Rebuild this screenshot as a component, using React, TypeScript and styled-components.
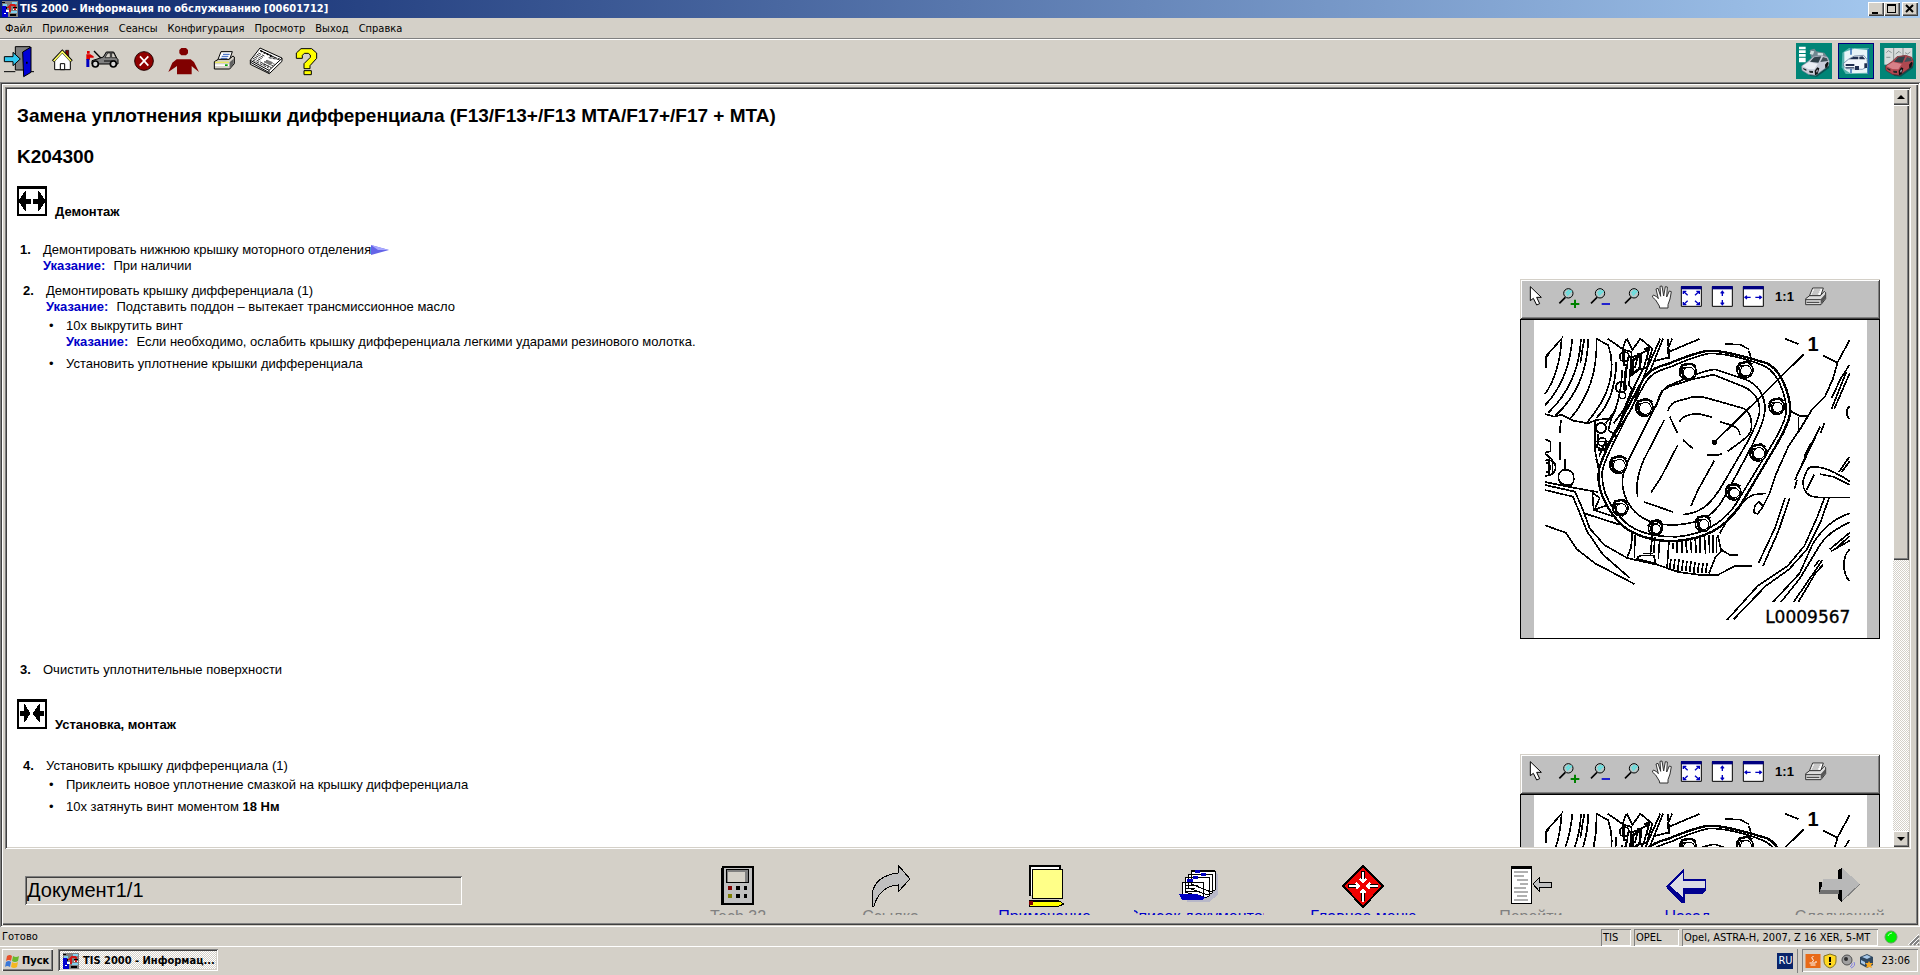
import React from "react";
import styled, { createGlobalStyle, css } from "styled-components";

const face = "#d4d0c8";
const ui = `"DejaVu Sans Condensed", "DejaVu Sans", Tahoma, sans-serif`;
const arial = `"Liberation Sans", Arial, sans-serif`;

const sunken = css`
  box-shadow: inset 1px 1px #808080, inset -1px -1px #fff, inset 2px 2px #404040, inset -2px -2px ${face};
`;
const raised = css`
  box-shadow: inset 1px 1px #fff, inset -1px -1px #404040, inset -2px -2px #808080;
`;
const checker = css`
  background: repeating-conic-gradient(#fff 0 25%, ${face} 0 50%) 0 0 / 2px 2px;
`;

const GlobalStyle = createGlobalStyle`
  * { box-sizing: border-box; }
  body { margin: 0; background: ${face}; color: #000; font: 11px/14px ${ui}; }
  button { border: 0; padding: 0; background: none; font: inherit; color: inherit; }
  svg { display: block; flex: none; }
`;

const Window = styled.div`
  display: flex;
  flex-direction: column;
  height: 100vh;
`;

const TitleBar = styled.header`
  display: flex;
  align-items: center;
  gap: 2px;
  height: 18px;
  padding: 0 2px;
  background: linear-gradient(90deg, #0a246a, #a6caf0);
  color: #fff;
`;
const Caption = styled.h1`
  flex: 1;
  margin: 0;
  font-size: 11px;
  line-height: 18px;
`;
const CaptionButton = styled.button<{ $spaced?: boolean }>`
  width: 16px;
  height: 14px;
  margin-left: ${(p) => (p.$spaced ? 0 : -2)}px;
  background: ${face};
  ${raised}
`;

const MenuBar = styled.nav`
  display: flex;
  height: 22px;
  gap: 10px;
  padding: 3px 5px 0;
  border-bottom: 1px solid #fff;
  box-shadow: inset 0 -1px #808080;
`;
const MenuItem = styled.button`
  height: 16px;
  line-height: 16px;
`;

const Toolbar = styled.div`
  display: flex;
  align-items: center;
  height: 42px;
  padding-right: 4px;
  gap: 1px;
`;
const ToolButton = styled.button`
  width: 40px;
  height: 40px;
`;
const ModeGroup = styled.div`
  display: flex;
  gap: 6px;
  margin-left: auto;
`;
const ModeButton = styled.button<{ $active?: boolean }>`
  width: 36px;
  height: 36px;
  background: #008577;
  border: 1px solid ${(p) => (p.$active ? "#000080" : "#008577")};
`;

const Frame = styled.main`
  flex: 1;
  min-height: 0;
  display: flex;
  padding: 2px;
  ${sunken}
`;
const Workspace = styled.div`
  flex: 1;
  min-width: 0;
  display: flex;
  flex-direction: column;
  padding: 3px 2px 2px 3px;
  ${raised}
`;
const Viewer = styled.section`
  flex: 1;
  min-height: 0;
  display: flex;
  margin-right: 5px;
  padding: 2px;
  background: #fff;
  ${sunken}
`;

const Page = styled.article`
  flex: 1;
  min-width: 0;
  overflow: hidden;
  padding: 15px 13px 0 10px;
  font: 13px/16px ${arial};
`;
const PageTitle = styled.h2`
  margin: 0 0 17px;
  font-size: 19px;
  line-height: 24px;
`;
const SectionTitle = styled.h3`
  display: flex;
  align-items: flex-end;
  gap: 8px;
  margin: 17px 0 21px;
  font-size: 13px;
  line-height: 16px;
  svg {
    margin-bottom: 4px;
  }
`;
const Steps = styled.ol`
  list-style: none;
  margin: 0 0 21px;
  padding: 0;
`;
const Step = styled.li<{ $figure?: boolean }>`
  display: flex;
  align-items: flex-start;
  padding-left: ${(p) => (p.$figure ? 6 : 3)}px;
  margin-bottom: ${(p) => (p.$figure ? 22 : 5)}px;
  &:last-child {
    margin-bottom: 0;
  }
`;
const StepNumber = styled.b<{ $figure?: boolean }>`
  width: 23px;
  padding-top: ${(p) => (p.$figure ? 4 : 1)}px;
`;
const StepBody = styled.div<{ $figure?: boolean }>`
  flex: 1;
  padding-top: ${(p) => (p.$figure ? 4 : 1)}px;
`;
const Line = styled.div`
  display: flex;
`;
const Note = styled.div`
  b {
    color: #0000c8;
    margin-right: 8px;
  }
`;
const Bullets = styled.ul`
  list-style: none;
  margin: 3px 0 0;
  padding: 0;
`;
const Bullet = styled.li`
  display: flex;
  margin-bottom: 6px;
  &::before {
    content: "•";
    width: 17px;
    padding-left: 3px;
  }
`;

const Figure = styled.figure`
  flex: none;
  width: 360px;
  margin: 0;
`;
const FigureTools = styled.div`
  display: flex;
  height: 40px;
  padding: 3px 1px;
  background: #c0c0c0;
  box-shadow: inset 1px 1px ${face}, inset -1px -1px #404040, inset 2px 2px #fff, inset -2px -2px #808080;
`;
const FigureButton = styled.button`
  width: 31px;
  height: 30px;
  font: bold 13px/30px ${arial};
`;
const FigureCanvas = styled.div`
  display: flex;
  justify-content: center;
  border: 1px solid #000;
  background: #c0c0c0;
  svg {
    background: #fff;
  }
`;

const ScrollBar = styled.div`
  display: flex;
  flex-direction: column;
  width: 16px;
  ${checker}
`;
const ScrollButton = styled.button`
  flex: none;
  width: 16px;
  height: 16px;
  background: ${face};
  ${raised}
`;
const ScrollTrack = styled.div`
  flex: 1;
`;
const ScrollThumb = styled.div`
  height: 62.7%;
  background: ${face};
  ${raised}
`;

const Panel = styled.footer`
  display: flex;
  align-items: flex-start;
  height: 74px;
`;
const PanelStatus = styled.div`
  flex: none;
  width: 34.4%;
  padding: 27px 0 0 20px;
`;
const DocumentField = styled.output`
  display: block;
  width: 68.6%;
  height: 29px;
  padding-left: 2px;
  font: 20px/28px ${arial};
  box-shadow: inset 1px 1px #808080, inset -1px -1px #fff, inset 2px 2px #404040;
`;
const PanelButtons = styled.div`
  flex: 1;
  display: grid;
  grid-template-columns: 152fr 154fr 155fr 155fr 175fr 161fr 153fr 153fr;
`;
const PanelButton = styled.button<{ $muted?: boolean }>`
  display: flex;
  flex-direction: column;
  align-items: center;
  height: 66px;
  padding-top: 15px;
  overflow: hidden;
  color: ${(p) => (p.$muted ? "#808080" : "#0000c8")};
`;
const PanelLabel = styled.span`
  display: flex;
  justify-content: center;
  width: 130px;
  overflow: hidden;
  white-space: nowrap;
  font: 16px/18px ${arial};
`;

const StatusBar = styled.div`
  display: flex;
  align-items: center;
  height: 20px;
  gap: 3px;
  padding: 1px 0 0 2px;
  border-bottom: 1px solid #fff;
`;
const StatusText = styled.span`
  flex: 1;
`;
const StatusCell = styled.span<{ $w: number }>`
  width: ${(p) => p.$w}px;
  height: 17px;
  padding-left: 2px;
  line-height: 17px;
  white-space: nowrap;
  box-shadow: inset 1px 1px #808080, inset -1px -1px #fff;
`;

const TaskBar = styled.div`
  display: flex;
  align-items: flex-start;
  height: 28px;
  padding: 2px 2px 0;
`;
const StartButton = styled.button`
  display: flex;
  align-items: center;
  gap: 2px;
  width: 51px;
  height: 22px;
  padding: 1px 0 0 2px;
  font-weight: bold;
  ${raised}
`;
const TaskButton = styled.button`
  display: flex;
  align-items: center;
  gap: 4px;
  width: 160px;
  height: 22px;
  margin-left: 5px;
  padding: 2px 0 0 5px;
  font-weight: bold;
  white-space: nowrap;
  ${checker}
  ${sunken}
`;
const Language = styled.button`
  width: 16px;
  height: 16px;
  margin: 4px 4px 0 auto;
  background: #0a246a;
  color: #fff;
`;
const Tray = styled.div`
  display: flex;
  align-items: center;
  gap: 1px;
  height: 23px;
  margin-left: 4px;
  padding: 1px 8px 0 3px;
  box-shadow: inset 1px 1px #808080, inset -1px -1px #fff;
`;
const TraySplit = styled.div`
  width: 1px;
  height: 24px;
  background: #808080;
`;
const Clock = styled.time`
  margin-left: 5px;
`;

const AppIcon = () => (
  <svg width="16" height="16" viewBox="0 0 16 16" shapeRendering="crispEdges">
    <path fill="#808080" d="M0 0h16v16H0z" />
    <path fill="#0000d0" d="M0 5h4v6h2v5H0z" />
    <path fill="#80d0f0" d="M1 3h4v2H1zM10 1h5v2h-5zM9 10h6v2H9z" />
    <path fill="#fff" d="M4 9h3v2H4zM11 8h4v1h-4zM2 12h2v1H2z" />
    <path fill="#d01818" d="M6 5l2-2h5v2H9v6H7V7H5zM12 4h2v5h-2z" />
    <path fill="#000" d="M0 1h3v1H0zM8 13h6v2H8zM11 6h4v1h-4zM4 6h1v2H4z" />
  </svg>
);

/* main toolbar icons, 40px cells on a 120-unit grid */
const toolIcons: { name: string; art: React.ReactNode }[] = [
  {
    name: "Выход",
    art: (
      <>
        <path fill="#808080" stroke="#000" strokeWidth="3" d="M46 17h44v70H46z" />
        <path stroke="#000" strokeWidth="3" d="M12 92h34M90 92h12" />
        <path fill="#0000d8" stroke="#000" strokeWidth="3" d="M68 33l25-15v76l-22 13z" />
        <path fill="#000" d="M78 62h5v6h-5z" />
        <path fill="#30c8f0" stroke="#000" strokeWidth="3" d="M13 47h26V34l22 20-22 20V62H13z" />
      </>
    ),
  },
  {
    name: "Домой",
    art: (
      <>
        <path fill="#800000" stroke="#000" strokeWidth="2" d="M74 28h9v25h-9z" />
        <path fill="#fff" stroke="#000" strokeWidth="3" d="M41 58l23-24 24 24v28H41z" />
        <path fill="none" stroke="#000" strokeWidth="9" d="M36 61l28-30 28 30" />
        <path fill="none" stroke="#ffff60" strokeWidth="5" d="M38 60l26-28 26 28" />
        <path fill="#fff" stroke="#000" strokeWidth="3" d="M58 68h13v18H58z" />
      </>
    ),
  },
  {
    name: "Автомобиль",
    art: (
      <>
        <path fill="#d00" d="M15 30h8v8h-8zM13 40h12l10 6v4H24v6H13z" />
        <path fill="#0000c0" d="M13 54h9v24h-9z" />
        <path fill="none" stroke="#000" strokeWidth="4" d="M36 30l21 22" />
        <path fill="#808080" stroke="#000" strokeWidth="3" d="M30 59l22-7 12-4 9-15h22l9 18 4 5v13H30z" />
        <path fill={face} stroke="#000" strokeWidth="2" d="M69 50l8-14h8v14zM89 36h6l7 14H89z" />
        <path stroke="#000" strokeWidth="3" d="M66 60h34" />
        <circle cx="40" cy="69" r="9" fill="#d8d8d8" stroke="#000" strokeWidth="5" />
        <circle cx="94" cy="69" r="9" fill="#d8d8d8" stroke="#000" strokeWidth="5" />
      </>
    ),
  },
  {
    name: "Отмена",
    art: (
      <>
        <circle cx="63" cy="60" r="28" fill="#900000" stroke="#200000" strokeWidth="3" />
        <path stroke="#fff" strokeWidth="5" d="M51 46l25 28M76 46L50 74" />
      </>
    ),
  },
  {
    name: "Клиент",
    art: (
      <path fill="#800000" d="M52 21h14l6 6v10l-6 6H52l-6-6V27zM38 55h42l10 8 15 30-18-14-4-4v25H39V75l-4 3-22 15 12-28z" />
    ),
  },
  {
    name: "Печать",
    art: (
      <>
        <path fill="#fff" stroke="#000" strokeWidth="3" d="M48 32h34l-9 26H38z" />
        <path stroke="#3060c0" strokeWidth="3" d="M54 40h20M50 46h20M47 52h20" />
        <path fill={face} stroke="#000" strokeWidth="3" d="M28 62l12-7h32l12-10 4 3v20L74 84H28z" />
        <path fill="#606060" d="M74 64l12-11v15L74 82z" />
        <path fill="#e8e860" d="M30 62h42v4H30z" />
        <path fill="#fff" d="M30 70h42v5H30z" />
        <path fill="#00a000" d="M60 70h8v5h-8z" />
      </>
    ),
  },
  {
    name: "Новости",
    art: (
      <>
        <path fill="#fff" stroke="#000" strokeWidth="3" d="M42 21l66 30v10L70 98 13 70V58z" />
        <path stroke="#000" strokeWidth="3" d="M42 28l50 24M13 58l56 30 39-36M69 88v9M14 64l54 30" />
        <path
          stroke="#333"
          strokeWidth="3"
          strokeDasharray="9 3"
          d="M37 36l18 9M33 40l18 9M29 44l18 9M25 48l18 9M21 52l50 25M20 57l48 24M68 50l32 6M72 46l30 8M54 62l28 13M60 58l26 12M50 68l26 12"
        />
        <path stroke="#000" strokeWidth="5" strokeDasharray="6 4" d="M44 30l36 17" />
        <path fill="#777" d="M63 56l18 8-8 9-18-9z" />
      </>
    ),
  },
  {
    name: "Справка",
    art: (
      <path
        fill="#ff0"
        stroke="#000"
        strokeWidth="3"
        d="M28 52V36l14-13h32l15 13v16L69 74v9H51V68l19-19v-7l-6-5H52l-6 6v9zM51 89h22v12H51z"
      />
    ),
  },
];

const Car = ({ body, light, shade }: { body: string; light: string; shade: string }) => (
  <>
    <path fill="#103038" d="M20 74l20 22 20 2 36-26 2-14z" opacity=".6" />
    <path fill={body} stroke={shade} strokeWidth="2" d="M14 66l20-14 14-14 26-4 18 6 5 12-3 14-38 28-22-3-19-12z" />
    <path fill={light} d="M16 66l20-12 26 6-10 16-18-1z" />
    <path fill="#304048" d="M39 53l12-13 22-3-9 19z" />
    <path fill="#405058" d="M70 54l8-15 12 4 3 8z" />
    <path fill="#202828" d="M18 72l10 4v5l-9-5zM36 80l12 1v6l-10-1z" />
    <path fill="#111" d="M53 80l8-10 6 3-5 17-8 4zM84 62l7-9 4 3-4 14-6 3z" />
    <path fill="#aab" d="M57 82l4-6 2 3-3 8z" />
  </>
);

const ArrowsBox = ({ inward }: { inward?: boolean }) => (
  <svg width="30" height="30" viewBox="0 0 30 30" shapeRendering="crispEdges">
    <path fill="#000" d="M0 0h30v30H0z" />
    <path fill="#fff" d="M2 3h26v25H2z" />
    {inward ? (
      <path fill="#000" d="M3 12h4V5h1l5 9v1l-5 8H7v-6H3zM27 12h-4V5h-1l-6 9v1l6 8h1v-6h4z" />
    ) : (
      <path fill="#000" d="M2 14l6-9h1v8h5v5H9v7H8l-6-9zM28 14l-6-9h-1v8h-5v5h5v7h1l6-9z" />
    )}
  </svg>
);

const Lens = ({ x }: { x: number }) => (
  <g transform={`translate(${x} 0)`}>
    <path stroke="#000" strokeWidth="5" d="M22 64l18-18" />
    <circle cx="49" cy="34" r="14" fill="#b8c8c8" stroke="#000" strokeWidth="3" />
    <path fill="none" stroke="#60e0e0" strokeWidth="5" d="M42 34l10-10M45 40l14-14" />
  </g>
);

const WindowGlyph = ({ arrows }: { arrows: string }) => (
  <>
    <path fill="#fff" stroke="#000" strokeWidth="3" d="M16 14h60v59H16z" />
    <path fill="#000080" d="M15 12h62v10H15z" />
    <path fill="none" stroke="#0000c0" strokeWidth="4" d={arrows} />
  </>
);

const figureIcons: { name: string; art: React.ReactNode }[] = [
  {
    name: "Выбор",
    art: <path fill="#fff" stroke="#000" strokeWidth="3" d="M28 14v42l9-7 10 20 9-4-9-19h14z" />,
  },
  {
    name: "Увеличить",
    art: (
      <>
        <Lens x={0} />
        <path stroke="#008000" strokeWidth="6" d="M56 66h26M69 53v25" />
      </>
    ),
  },
  {
    name: "Уменьшить",
    art: (
      <>
        <Lens x={2} />
        <path stroke="#0000d0" strokeWidth="5" d="M56 66h25" />
      </>
    ),
  },
  { name: "Лупа", art: <Lens x={11} /> },
  {
    name: "Перемещение",
    art: (
      <path
        fill="#fff"
        stroke="#333"
        strokeWidth="3"
        d="M43 72L32 54l-10-9 3-6 10 5 5 6-7-29 6-2 8 24-2-30 6-1 5 30 5-28 6 1-2 30 8-18 6 2-4 22-6 17v10H44z"
      />
    ),
  },
  {
    name: "По размеру окна",
    art: <WindowGlyph arrows="M22 36v-8h9M22 28l13 12M70 36v-8h-9M70 28L57 40M22 60v8h9M22 68l13-12M70 60v8h-9M70 68L57 56" />,
  },
  { name: "По высоте", art: <WindowGlyph arrows="M46 28v14M46 54v14M41 34l5-6 5 6M41 62l5 6 5-6" /> },
  { name: "По ширине", art: <WindowGlyph arrows="M21 46h17M52 46h18M27 41l-6 5 6 5M64 41l6 5-6 5" /> },
  { name: "1:1", art: null },
  {
    name: "Печать рисунка",
    art: (
      <>
        <path fill="#fff" stroke="#333" strokeWidth="3" d="M38 18h32l-8 24H28z" />
        <path stroke="#555" strokeWidth="2" d="M41 24h20M38 30h20M35 36h20" />
        <path fill="#ddd" stroke="#333" strokeWidth="3" d="M17 50l12-9h32l12-13 4 4v18L63 68H17z" />
        <path fill="#555" d="M62 52l14-16v14L62 67z" />
        <path stroke="#333" strokeWidth="3" d="M18 53h44M20 61h38" />
      </>
    ),
  },
];

const bolts = [
  [531, 306, 25], [702, 300, 24], [400, 413, 26], [797, 410, 23], [741, 548, 25],
  [322, 584, 26], [667, 667, 23], [328, 714, 23], [433, 775, 21], [576, 762, 23],
];

const Drawing = () => (
  <svg width="333" height="318" viewBox="69 150 999 954" fill="none" stroke="#000" strokeWidth="5" shapeRendering="crispEdges">
    {/* bellows, upper left */}
    <path d="M102 262l50-56Q146 310 102 372M120 240l-16 26v28M184 206Q174 330 102 406M210 206Q204 340 112 428M232 206Q228 350 134 436M220 206Q214 240 208 280M256 206Q262 350 176 448M256 206l36 20Q330 340 226 460M316 276Q312 390 256 444M334 300Q330 390 300 450M102 432l28 8 20-6 36 18 46 8 22-10 40-4" />
    {/* bracket between the bellows and the cover */}
    <path d="M150 450l-4 40M146 515v55M252 450v90l10 55M290 206l46 32 26 8M346 206l-12 34M348 206l16 34 24-34 36 30-16 56-20 6M448 206l-40 90-46 120-66 100M456 206l-40 100M470 206l6 62M484 206l-14 30 4 30M475 245l90-38M474 262l-46 12M362 246l-8 100 10 14 34-66 16-54-50 22M352 260l-14 100M382 250l-10 44M362 360l-24 60-30 40M372 350l-40 90" />
    <circle cx="340" cy="260" r="14" />
    <circle cx="330" cy="352" r="16" />
    <circle cx="334" cy="376" r="10" />
    <path strokeWidth="8" d="M366 270l24-14-4 40-22 16zM400 240l16-8M404 266l8 2M336 240l4 48M346 290l-6 60" />
    <circle cx="270" cy="474" r="15" />
    <path d="M284 460l30-40M262 492l-4 40 24 10 30-60M256 514h50M264 560l22-50M302 440l-10 40 26 20M254 566l12 26" />
    <circle cx="274" cy="516" r="12" />
    <path strokeWidth="8" d="M262 540l22-4 10-18" />
    {/* pipe clamp on the left edge */}
    <path d="M102 508l16 6v30l-16 4M102 572c20-6 32 6 32 20s-12 26-32 26M106 580c16-4 16 28 0 26M114 568v50M124 574v36M162 568v30M142 620c0-28 44-28 46 0s-10 24-22 24-24-4-24-24zM150 644h34M102 550l22 20" />
    <path d="M102 645l90 20 22 50 22 60 44 50 70 40M102 660l84 20 18 44 24 60 48 70 80 70M102 636l90 18 68 12M244 668l4 52 40-14M244 668l22 16-16 36 60 20M220 730l106 34M102 766l62 22 34 50 54 42 118 62" />
    {/* cover flange */}
    <path
      strokeWidth="7"
      d="M598 242C650 242 735 270 768 280C810 300 836 370 838 420C840 450 800 520 780 552L688 706C650 765 590 806 500 812C420 818 350 790 318 750C280 705 256 650 264 600C270 560 310 500 330 450L392 336C410 300 440 290 470 282C510 266 560 244 598 242z"
    />
    <path d="M600 250C660 252 730 274 764 290C800 310 824 370 826 420C826 450 792 510 770 545L676 700C640 755 586 792 500 800C420 802 360 780 328 742C290 700 270 650 274 604C282 560 320 500 340 454L402 340C420 308 450 300 480 290C520 274 566 252 600 250z" />
    <path d="M612 298l90 30c40 14 60 50 60 90-2 40-30 90-50 130l-70 130c-30 56-66 80-140 86-60 4-110-10-140-50-30-40-36-84-16-130l90-180c10-30 14-40 34-56l54-22c20-8 56-26 88-28z" />
    <path d="M608 314l94 38c30 16 44 40 44 70-2 30-24 70-40 100l-70 120c-30 50-56 86-120 92M454 362l20-12 70-22 64-14M454 362l-20 50" />
    {/* cover recess */}
    <path d="M470 424c10-26 20-30 50-36 26-10 40-10 60-6l120 34c20 14 24 40 20 66-8 20-20 24-40 40l-30 22M506 456c4-16 30-26 60-24l38 10M628 456c30 8 60 14 58 40M476 440l24 50M516 510l30 26M588 554c20 4 30 2 44-2M460 450l-62 120c-16 40-24 70-18 112M500 526l-50 96-30 46M610 572l-50 90-20 46M400 696l46 16 40 14" />
    <path d="M610 517l268-264" />
    <circle cx="610" cy="517" r="5" fill="#000" />
    {bolts.map(([x, y, r]) => (
      <g key={`${x}-${y}`}>
        <circle cx={x} cy={y} r={r} fill="#fff" />
        <path strokeWidth="7" d={`M${x - r} ${y - 6}l8 -14l${r} -5l${r - 10} 8M${x - r + 6} ${y - 8}l6 ${r}l${r - 4} 8M${x - r + 8} ${y - 12}h${r}`} />
        <circle cx={x + 3} cy={y + 2} r={r - 8} fill="#fff" strokeWidth="3" />
      </g>
    ))}
    {/* drain housing below the cover */}
    <path d="M364 790l-4 44-12 30 90 20 64 22 60 8h60l50-26h50M372 794l-2 70M424 796l-6 60M432 800l-4 50M446 806l-4 60M474 812l-6 84M378 862l14-6h36l6 24-60-14M396 850h30M594 910l20-50 22-20M620 794l10 46 26 14h24M626 790l26-44 54-60 22-12 38-4" />
    <path d="M486 818v20M498 812v36M512 812l2 36M524 808l4 42M538 804l4 46M552 800l4 50M566 800l2 50M580 796l4 56M594 794l2 56M606 796v54M616 800v48" />
    <path d="M480 866l-4 28M492 866l-4 32M504 868l-4 34M516 870l-4 34M528 872l-4 32M540 874l-4 32M552 876l-4 32M564 878l-4 30M576 880l-4 28M588 880l-4 28" />
    {/* body panels on the right */}
    <path d="M642 222l46 2 26 14M714 244l6 20M822 206l40 16M936 256l44 22M1016 210l-36 66-14 50-24 54-40 40-30 50-40 60-36 80-20 60-20 40-16 22-12-4 4-22 12-10 14 14M840 424l26 14h24l-26 46M862 440v40M1016 284l-26 40-28 60M1006 306l-44 110M1016 310l-46 106M1016 410c-12 6-12 30 0 36M940 460l-12 30M928 470l-40 80-36 80M914 500l-56 116M900 520l-20 40M1016 560l-12 16-20 30M1016 574l-24 32" />
    <path d="M1016 634c-30-20-70-44-110-44-20 0-20 20-28 36-6 26 2 40 20 52l22 4h96M926 612l40 8 50 24M886 660l24-46M822 684l-30 90-50 106M836 684l-34 100-46 104M940 684l-20 54-40 90-50 60-90 60-92 102M954 684l-26 74-40 80-54 60-70 50-96 100M1016 730c-60 20-90 60-110 90l-40 90-80 86M1016 756c-50 26-70 40-90 70l-60 100-56 70M1016 788l-60 50M1016 798l-44 40M1016 812l-56 32M934 870l-20 30-66 96M936 884l-24 28-50 84M924 870l-14 20M1016 838c-22 20-24 70 0 96M858 630l-8 28" />
    <g fill="#000" stroke="none">
      <text x="906" y="244" fontSize="60" fontWeight="bold" textAnchor="middle" fontFamily="Liberation Sans, sans-serif">1</text>
      <text x="1018" y="1059" fontSize="51" textAnchor="end" stroke="#000" strokeWidth="1" fontFamily="DejaVu Sans, sans-serif">L0009567</text>
    </g>
  </svg>
);

const FigureView = () => (
  <Figure>
    <FigureTools>
      {figureIcons.map(({ name, art }) => (
        <FigureButton key={name} aria-label={name}>
          {art ? (
            <svg width="31" height="30" viewBox="0 0 93 90" fill="none">
              {art}
            </svg>
          ) : (
            name
          )}
        </FigureButton>
      ))}
    </FigureTools>
    <FigureCanvas>
      <Drawing />
    </FigureCanvas>
  </Figure>
);

const panelItems: { label: string; muted?: boolean; art: React.ReactNode }[] = [
  {
    label: "Tech 32",
    muted: true,
    art: (
      <>
        <path fill="#000" d="M6 2h32v39H5V4h1z" />
        <path fill="#c0c0c0" d="M8 4h28v35H8z" />
        <path fill="#000" d="M10 5h23v14H10z" />
        <path fill="#808080" d="M11 6h21v12H11z" />
        <path fill={face} d="M12 8h17v10H12z" />
        <path fill="#000" d="M20 22h4v4h-4zM28 22h3v4h-3zM20 30h4v4h-4zM28 30h3v4h-3z" />
        <path fill="#800000" d="M12 22h4v4h-4z" />
        <path fill="#808000" d="M12 30h4v4h-4z" />
      </>
    ),
  },
  {
    label: "Ссылка",
    muted: true,
    art: <path fill="#c0c0c0" stroke="#000" strokeWidth="1" d="M3 42V30q3-18 26-21V1l12 14-12 13v-7Q11 22 5 42z" />,
  },
  {
    label: "Примечание",
    art: (
      <>
        <path fill="#fff" stroke="#000" strokeWidth="2" d="M7 32V2h30v3" />
        <path fill="#ffff88" stroke="#000" strokeWidth="1" d="M9 5h30v29H9z" />
        <path fill="#ff0" stroke="#000" strokeWidth="1" d="M6 37h30l5 3-5 2H6z" />
        <path fill="#000" d="M6 36h30v1H6z" />
        <path fill="#800000" d="M6 37h4v4H6z" />
      </>
    ),
  },
  {
    label: "Список документов",
    art: (
      <>
        <path fill="#b8b8c8" d="M10 34L38 8l3 3v20L32 38H10z" />
        <path fill="#fff" stroke="#000" strokeWidth="1" d="M14 20V7h24v19l-4 2zM11 24V10h24v19l-4 2zM8 28V13h24v19l-4 2zM5 31V18h21v16l-3-3H5z" />
        <path fill="#000" d="M14 6h24v2H14z" />
        <path fill="#0000c0" d="M18 6h5v3h-5zM24 9h5v3h-5zM16 12h5v3h-5zM10 15h6v3h-6zM2 30h18l4 2 4 1-3 3H5z" />
        <path stroke="#000" strokeWidth="1" d="M8 21h13M8 24h10M8 27h12" />
      </>
    ),
  },
  {
    label: "Главное меню",
    art: (
      <>
        <path fill="#f00000" stroke="#000" strokeWidth="2" d="M22 2l20 20-20 21L2 22z" />
        <path stroke="#000" strokeWidth="4" d="M22 7v10M22 27v10M7 22h10M27 22h10" />
        <path stroke="#fff" strokeWidth="2" d="M22 8v9M22 27v11M8 22h10M27 22h10M19 15l3 3 3-3M19 29l3-3 3 3M15 19l3 3-3 3M29 19l-3 3 3 3" />
      </>
    ),
  },
  {
    label: "Перейти",
    muted: true,
    art: (
      <>
        <path fill="#fff" stroke="#000" strokeWidth="1" d="M2 3h20v36H2z" />
        <path fill="#000" d="M2 2h21v3H2z" />
        <path stroke="#b0b0b0" strokeWidth="2" d="M5 8h14M5 12h10M8 16h11M11 20h8M5 24h12M5 28h14M8 32h10M5 36h14" />
        <path fill="#c0c0c0" stroke="#000" strokeWidth="1" d="M24 20l6-6v4h12v5H30v4z" />
      </>
    ),
  },
  {
    label: "Назад",
    art: (
      <>
        <path fill="#000090" d="M1 22L19 4v11h22v11l-4 4H20v9l-3 0L3 26z" />
        <path fill="#dcdce4" d="M5 22L18 8v9h22v7H18v9z" />
      </>
    ),
  },
  {
    label: "Следующий",
    muted: true,
    art: (
      <>
        <path fill="#000" d="M20 6l4-2v35l-4-5zM1 18h5v12H1z" />
        <path fill="#707070" d="M3 24h18v6H1z" />
        <path fill="#b8b8b8" d="M5 15h19V4l18 16-18 17V26H3z" />
        <path fill="none" stroke="#808080" strokeWidth="1" d="M24 37l18-17" />
      </>
    ),
  },
];

const menus = ["Файл", "Приложения", "Сеансы", "Конфигурация", "Просмотр", "Выход", "Справка"];

export default function App() {
  return (
    <Window>
      <GlobalStyle />
      <TitleBar>
        <AppIcon />
        <Caption>TIS 2000 - Информация по обслуживанию [00601712]</Caption>
        <CaptionButton aria-label="Свернуть">
          <svg width="16" height="14"><path fill="#000" d="M4 10h6v2H4z" /></svg>
        </CaptionButton>
        <CaptionButton aria-label="Развернуть">
          <svg width="16" height="14" shapeRendering="crispEdges"><path fill="#000" fillRule="evenodd" d="M3 2h9v9H3zM4 4v6h7V4z" /></svg>
        </CaptionButton>
        <CaptionButton $spaced aria-label="Закрыть">
          <svg width="16" height="14"><path stroke="#000" strokeWidth="2" d="M4 3l7 7M11 3l-7 7" /></svg>
        </CaptionButton>
      </TitleBar>
      <MenuBar>
        {menus.map((m) => (
          <MenuItem key={m}>{m}</MenuItem>
        ))}
      </MenuBar>
      <Toolbar>
        {toolIcons.map(({ name, art }) => (
          <ToolButton key={name} aria-label={name}>
            <svg width="40" height="40" viewBox="0 0 120 120" fill="none">{art}</svg>
          </ToolButton>
        ))}
        <ModeGroup>
          <ModeButton aria-label="Каталог">
            <svg width="34" height="34" viewBox="0 0 102 102">
              <path fill="#fff" d="M6 8h20v8H6zM6 19h20v8H6zM6 30h20v8H6zM6 41h20v14H6z" />
              <path fill="#708890" d="M38 18l14-4 6 8 24 4 10 14-20 8-30-8z" />
              <path fill="#d0e0e0" d="M42 20l10 2-4 10-10-2zM62 26l16 2v8l-16-2z" />
              <Car body="#c8ccd8" light="#eceef4" shade="#8890a0" />
            </svg>
          </ModeButton>
          <ModeButton $active aria-label="Обслуживание">
            <svg width="34" height="34" viewBox="0 0 102 102">
              <path fill="#80c8c8" d="M10 26l20-14h60v78H20L8 70z" opacity=".7" />
              <path fill="#e8f4f8" d="M16 24l30-10 38 4v68l-50 2-18-12z" />
              <path fill="#2060b0" d="M86 14h5v78h-5zM34 70h4v18h-4zM34 12h4v20h-4z" />
              <path fill="#f4f8fc" stroke="#506890" strokeWidth="2" d="M14 58l14-12 18-10 28-2 10 12 2 22-16 8-48-2-8-8z" />
              <path fill="#203050" d="M30 46l14-8h14v8zM61 38l10-1 8 9H61zM20 60h26v6H20zM48 66h12v12H48zM76 58h8v14h-8zM20 70h26v3H20z" />
            </svg>
          </ModeButton>
          <ModeButton aria-label="Кузов">
            <svg width="34" height="34" viewBox="0 0 102 102">
              <path fill="#d8dcdc" d="M10 12h84v50H10z" />
              <path fill="none" stroke="#607070" strokeWidth="2" d="M38 12v40M66 12v40M16 26l6-6 10 6M44 30l10-8 6 6M72 26l8 4 8-6M16 40h12M46 40h14" />
              <Car body="#b04850" light="#d88088" shade="#702028" />
            </svg>
          </ModeButton>
        </ModeGroup>
      </Toolbar>

      <Frame>
        <Workspace>
          <Viewer>
            <Page>
              <PageTitle>Замена уплотнения крышки дифференциала (F13/F13+/F13 MTA/F17+/F17 + MTA)</PageTitle>
              <PageTitle>K204300</PageTitle>
              <SectionTitle>
                <ArrowsBox />
                Демонтаж
              </SectionTitle>
              <Steps>
                <Step>
                  <StepNumber>1.</StepNumber>
                  <StepBody>
                    <Line>
                      Демонтировать нижнюю крышку моторного отделения
                      <a href="#cover" aria-label="Перейти к документу">
                        <svg width="18" height="16" viewBox="0 0 18 16">
                          <path fill="#6464e8" d="M0 3l18 5-18 5z" />
                          <path fill="#a8a8ff" d="M0 3l18 5H7z" />
                        </svg>
                      </a>
                    </Line>
                    <Note><b>Указание:</b>При наличии</Note>
                  </StepBody>
                </Step>
                <Step $figure>
                  <StepNumber $figure>2.</StepNumber>
                  <StepBody $figure>
                    <Line>Демонтировать крышку дифференциала (1)</Line>
                    <Note><b>Указание:</b>Подставить поддон – вытекает трансмиссионное масло</Note>
                    <Bullets>
                      <Bullet>
                        <div>
                          10x выкрутить винт
                          <Note><b>Указание:</b>Если необходимо, ослабить крышку дифференциала легкими ударами резинового молотка.</Note>
                        </div>
                      </Bullet>
                      <Bullet>Установить уплотнение крышки дифференциала</Bullet>
                    </Bullets>
                  </StepBody>
                  <FigureView />
                </Step>
                <Step>
                  <StepNumber>3.</StepNumber>
                  <StepBody>Очистить уплотнительные поверхности</StepBody>
                </Step>
              </Steps>
              <SectionTitle>
                <ArrowsBox inward />
                Установка, монтаж
              </SectionTitle>
              <Steps>
                <Step $figure>
                  <StepNumber $figure>4.</StepNumber>
                  <StepBody $figure>
                    <Line>Установить крышку дифференциала (1)</Line>
                    <Bullets>
                      <Bullet>Приклеить новое уплотнение смазкой на крышку дифференциала</Bullet>
                      <Bullet>
                        <div>10x затянуть винт моментом <b>18 Нм</b></div>
                      </Bullet>
                    </Bullets>
                  </StepBody>
                  <FigureView />
                </Step>
              </Steps>
            </Page>
            <ScrollBar>
              <ScrollButton aria-label="Вверх">
                <svg width="16" height="16"><path fill="#000" d="M4 10l4-4 4 4z" /></svg>
              </ScrollButton>
              <ScrollTrack>
                <ScrollThumb />
              </ScrollTrack>
              <ScrollButton aria-label="Вниз">
                <svg width="16" height="16"><path fill="#000" d="M4 6l4 4 4-4z" /></svg>
              </ScrollButton>
            </ScrollBar>
          </Viewer>
          <Panel>
            <PanelStatus>
              <DocumentField>Документ1/1</DocumentField>
            </PanelStatus>
            <PanelButtons>
              {panelItems.map(({ label, muted, art }) => (
                <PanelButton key={label} $muted={muted}>
                  <svg width="44" height="44" viewBox="0 0 44 44" fill="none" shapeRendering="crispEdges">{art}</svg>
                  <PanelLabel>{label}</PanelLabel>
                </PanelButton>
              ))}
            </PanelButtons>
          </Panel>
        </Workspace>
      </Frame>

      <StatusBar>
        <StatusText>Готово</StatusText>
        <StatusCell $w={30}>TIS</StatusCell>
        <StatusCell $w={45}>OPEL</StatusCell>
        <StatusCell $w={196}>Opel, ASTRA-H, 2007, Z 16 XER, 5-MT</StatusCell>
        <svg width="39" height="18" viewBox="0 0 39 18">
          <circle cx="10" cy="9" r="6" fill="#00f000" stroke="#60a060" />
          <path fill="none" stroke="#c0ffc0" d="M7 8q1-3 4-3" />
          <path stroke="#808080" strokeWidth="2" d="M29 17l9-9M33 17l5-5M37 17l1-1" />
          <path stroke="#fff" d="M27 17L38 6M31 17l7-7M35 17l3-3" />
        </svg>
      </StatusBar>
      <TaskBar>
        <StartButton>
          <svg width="16" height="16" viewBox="0 0 16 16">
            <path fill="#e8502a" d="M3 3q3-2 5 0L7 8Q5 6 2 8z" />
            <path fill="#6ab82c" d="M9 3q3 2 6 0l-1 5q-3 2-6 0z" />
            <path fill="#3a78d8" d="M2 9q3-2 5 0l-1 5q-3-2-5 0z" />
            <path fill="#f4b820" d="M8 9q3 2 6 0l-1 5q-3 2-6 0z" />
          </svg>
          Пуск
        </StartButton>
        <TaskButton>
          <AppIcon />
          TIS 2000 - Информац...
        </TaskButton>
        <Language>RU</Language>
        <TraySplit />
        <Tray>
          <svg width="16" height="16" viewBox="0 0 15 16">
            <path fill="#e86a18" d="M0 1h15v14H0z" />
            <path fill="none" stroke="#fff" d="M8 3q-3 2-1 3t0 3M4 10h6M5 12h5M10 10q2-1 0-2" />
          </svg>
          <svg width="17" height="16" viewBox="0 0 15 16">
            <path fill="#ffd820" stroke="#807020" d="M7 1l6 2v5q0 5-6 7-6-2-6-7V3z" />
            <path fill="#000" d="M6 4h2v5H6zM6 10h2v2H6z" />
          </svg>
          <svg width="17" height="16" viewBox="0 0 15 16">
            <circle cx="6" cy="7" r="5" fill="#a0a0a0" stroke="#505050" />
            <circle cx="5" cy="6" r="2" fill="#303030" />
            <path fill="none" stroke="#8080e0" d="M11 10q1 2-2 4M13 9q2 4-3 6" />
          </svg>
          <svg width="17" height="16" viewBox="0 0 15 16">
            <path fill="#304860" d="M1 4l7-3 6 3v8l-6 3-7-4z" />
            <path fill="#a8c8e8" d="M3 4l5-2 4 2-4 2zM2 7l4 2v3l-4-2z" />
            <path fill="#f8a820" d="M10 8l1 2h3l-2 2 1 3-3-1-3 1 1-3-2-2h3z" />
          </svg>
          <Clock>23:06</Clock>
        </Tray>
      </TaskBar>
    </Window>
  );
}
